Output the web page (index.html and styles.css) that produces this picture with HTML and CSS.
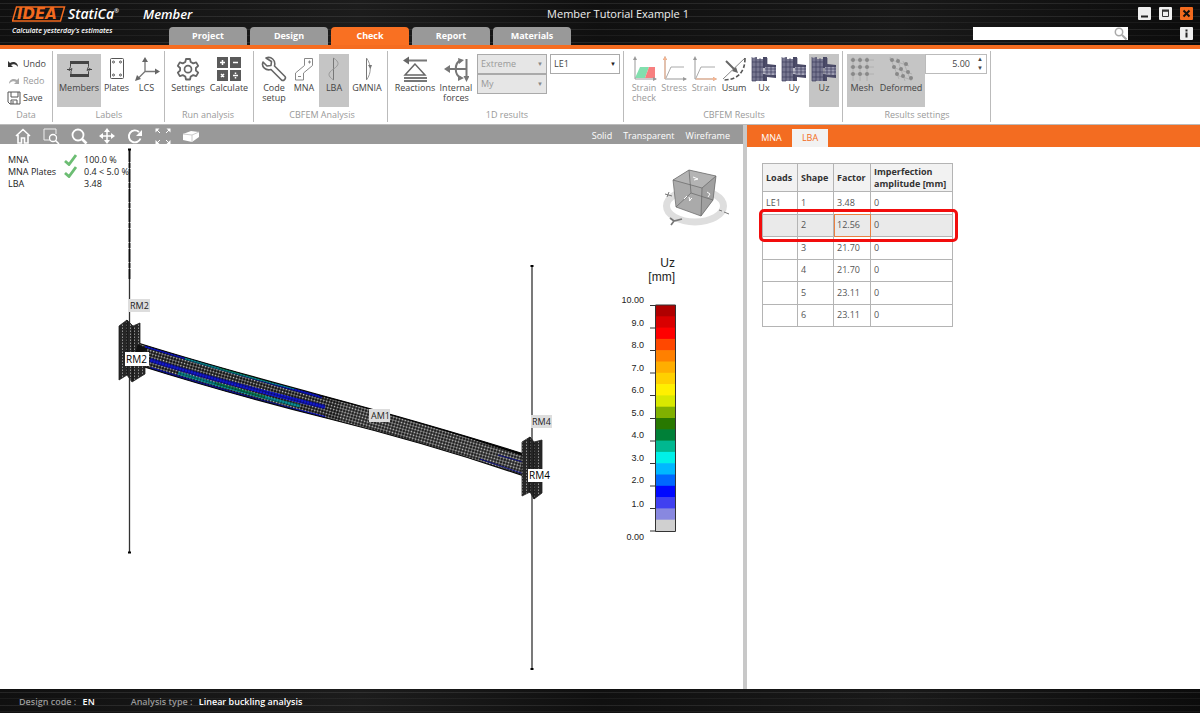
FILE: index.html
```html
<!DOCTYPE html>
<html lang="en">
<head>
<meta charset="utf-8">
<title>IDEA StatiCa Member</title>
<link rel="stylesheet" href="styles.css">
</head>
<body>
<svg class="defs" aria-hidden="true">
  <symbol id="joint" viewBox="0 0 26 26">
    <path d="M1 2l5-1v24H1zM6 3h6v22H6z" fill="#777790"/>
    <path d="M12 1h4v7l9 1v3H12zM12 18l13 1v3l-9-1v4h-4z" fill="#4c4c68"/>
    <path d="M14 11h11v8l-11-1z" fill="#9c9cb2"/>
    <path d="M1 1v24h4V1M9 2v23M13 1v24M16 2v6M16 11v7M20 10v9M24 9v12M1 6h11M1 11h11M1 16h24M1 21h11M14 13h11" fill="none" stroke="#3e3e5b" stroke-width=".7"/>
  </symbol>
  <symbol id="axes" viewBox="0 0 26 26">
    <path d="M4 2v21h21" fill="none" stroke="#999"/>
    <path d="M4 0L2 4h4zM26 23l-4-2v4z" fill="#999"/>
  </symbol>
</svg>

<header class="titlebar">
  <div class="brand">
    <div class="brand-row">
      <svg class="logo" width="54" height="16" viewBox="0 0 54 16" role="img" aria-label="IDEA">
        <path d="M4.500 1h48l-4 14h-48z" fill="none" stroke="#f26a1e" stroke-width="1.500"/>
        <text x="5" y="13" class="logo-text">IDEA</text>
      </svg>
      <span class="brand-name">StatiCa<sup>®</sup></span>
      <span class="brand-app">Member</span>
    </div>
    <div class="tagline">Calculate yesterday's estimates</div>
  </div>
  <div class="doc-title">Member Tutorial Example 1</div>
  <div class="window-controls">
    <button aria-label="Minimize"><svg viewBox="0 0 13 13"><path d="M3 9.500h7" stroke="#222" stroke-width="2"/></svg></button>
    <button aria-label="Maximize"><svg viewBox="0 0 13 13"><path d="M3.500 4h6v5.500h-6z" fill="none" stroke="#333"/><path d="M3 3.500h7" stroke="#333" stroke-width="2"/></svg></button>
    <button class="close" aria-label="Close"><svg viewBox="0 0 13 13"><path d="M3.500 3.500l6 6m0-6l-6 6" stroke="#111" stroke-width="2"/></svg></button>
  </div>
  <nav class="tabs">
    <button>Project</button><button>Design</button><button class="active">Check</button><button>Report</button><button>Materials</button>
  </nav>
  <div class="search-row">
    <div class="search">
      <input type="text" aria-label="Search">
      <svg viewBox="0 0 13 13"><circle cx="5" cy="5" r="3.700" fill="none" stroke="#aaa" stroke-width="1.500"/><path d="M8 8l4.500 4.500" stroke="#aaa" stroke-width="2"/></svg>
    </div>
    <button class="info" aria-label="Info"><svg viewBox="0 0 13 13"><path d="M6.500 2.500v2M6.500 5.500v5" stroke="#222" stroke-width="2"/></svg></button>
  </div>
</header>

<section class="ribbon">
  <div class="group data">
    <div class="stack">
      <button><svg viewBox="0 0 14 14"><path d="M1 4v6h5L4 8c3-2 6 0 7 2 0-5-5-6-8-4z" fill="#333"/></svg>Undo</button>
      <button class="off"><svg viewBox="0 0 14 14"><path d="M12 4v6H7l2-2C6 6 3 8 2 10c0-5 5-6 8-4z" fill="#aaa"/></svg>Redo</button>
      <button><svg viewBox="0 0 14 14"><path d="M1 1h12v12H3l-2-2zM4 1v5h7V1M4 13V9h6v4M6 10v3" fill="none" stroke="#555"/></svg>Save</button>
    </div>
    <h2>Data</h2>
  </div>

  <div class="group labels">
    <div class="tools">
      <button class="tool w44 on"><svg viewBox="0 0 26 26"><path d="M4 6.500h19M4 19.500h19" stroke="#444" stroke-width="3"/><path d="M4.500 5v5.500l-1.500 4 3-2-1 3v5.500M22.500 5v5.500l-1.500 4 3-2-1.500 3v5.500M1 13.500h4M22 13.500h4" fill="none" stroke="#444"/></svg>Members</button>
      <button class="tool w31"><svg viewBox="0 0 26 26"><rect x="6.500" y="2.500" width="13" height="20" rx="1" fill="none" stroke="#555"/><g fill="none" stroke="#555"><circle cx="9.500" cy="6" r="1"/><circle cx="16.500" cy="6" r="1"/><circle cx="9.500" cy="19" r="1"/><circle cx="16.500" cy="19" r="1"/></g></svg>Plates</button>
      <button class="tool w29"><svg viewBox="0 0 26 26"><path d="M11 3v12.500h13M11 15.500l-8 8" fill="none" stroke="#777" stroke-width="1.300"/><path d="M11 1L8 6h6zM26 15.500l-5-3v6zM1 25l2-6 4 4z" fill="#666"/></svg>LCS</button>
    </div>
    <h2>Labels</h2>
  </div>

  <div class="group run">
    <div class="tools">
      <button class="tool w42"><svg viewBox="0 0 26 26"><path d="M11 3h4l.700 3 2.500 1.400 3-1 2 3.500-2.300 2.100v2.500l2.300 2.100-2 3.500-3-1-2.500 1.400-.700 3h-4l-.700-3-2.500-1.400-3 1-2-3.500 2.300-2.100V12L2.800 9.900l2-3.500 3 1L10.300 6z" fill="none" stroke="#666" stroke-width="1.800" stroke-linejoin="round"/><circle cx="13" cy="13.200" r="3.500" fill="none" stroke="#666" stroke-width="1.700"/></svg>Settings</button>
      <button class="tool w40"><svg viewBox="0 0 26 26"><path d="M1 1h11v11H1zM14 1h11v11H14zM1 14h11v11H1zM14 14h11v11H14z" fill="#5a5a5a"/><path d="M6.500 4v5M4 6.500h5M17 6.500h5M5 18l3 3m0-3l-3 3M17 19.500h5M19.500 16.500v1.500M19.500 21v1.500" stroke="#fff" stroke-width="1.500"/></svg>Calculate</button>
    </div>
    <h2>Run analysis</h2>
  </div>

  <div class="group cbfem">
    <div class="tools">
      <button class="tool w30"><svg viewBox="0 0 26 26"><path d="M5 2c5-2 10 2 8.500 8L24 20.500c1.500 2-1.500 5-3.500 3.500L10 13.500C5 15 0 11 2 6l4 4 4-.500.500-4z" fill="none" stroke="#666" stroke-width="1.600" stroke-linejoin="round"/></svg>Code setup</button>
      <button class="tool w30"><svg viewBox="0 0 26 26"><path d="M13.500 2.500h8v7l-9 7.500v7h-8v-7l9-7.500zM17 6h3M18.500 4.500v3M7 20.500h3" fill="none" stroke="#888"/></svg>MNA</button>
      <button class="tool w30 on"><svg viewBox="0 0 26 26"><path d="M12.500 2v22" stroke="#777"/><path d="M12.500 2c6 4 6 7 0 11s-6 7 0 11" fill="none" stroke="#999"/></svg>LBA</button>
      <button class="tool w36"><svg viewBox="0 0 26 26"><path d="M12.500 2v22" stroke="#777"/><path d="M12.500 2c5 7 5 15 0 22" fill="none" stroke="#999"/><path d="M14 9h4l-1.500 4z" fill="#777"/></svg>GMNIA</button>
    </div>
    <h2>CBFEM Analysis</h2>
  </div>

  <div class="group oned">
    <div class="tools">
      <button class="tool w42"><svg viewBox="0 0 26 26"><path d="M6 4.500h19M2 22h23M2 25h23" stroke="#777" stroke-width="2"/><path d="M1 4.500l6-4v8z" fill="#666"/><path d="M13 8L3 19h20z" fill="none" stroke="#666" stroke-width="1.500"/></svg>Reactions</button>
      <button class="tool w40"><svg viewBox="0 0 26 26"><path d="M5 13h14M18 4c-7 3-7 15 0 18M23.500 3v18M19 13h5" fill="none" stroke="#777" stroke-width="2"/><path d="M1 13l6-4v8zM21 4l-6-2 1 6zM23.500 26l-3-6h6zM21 22l-6-3v6z" fill="#777"/></svg>Internal forces</button>
      <div class="selects">
        <span class="select off"><select disabled aria-label="Extreme"><option>Extreme</option></select></span>
        <span class="select off"><select disabled aria-label="Component"><option>My</option></select></span>
      </div>
      <span class="select"><select aria-label="Load"><option>LE1</option></select></span>
    </div>
    <h2>1D results</h2>
  </div>

  <div class="group results">
    <div class="tools">
      <button class="tool w30 off"><svg viewBox="0 0 26 26"><path d="M4 22l5-11h9l-4 11z" fill="#82dfae"/><path d="M14 22l4-11h6v11z" fill="#f77f7f"/><use href="#axes"/></svg>Strain check</button>
      <button class="tool w30 off"><svg viewBox="0 0 26 26"><use href="#axes"/><path d="M4 2v21" stroke="#f8b58f"/><path d="M4 0L2 4h4z" fill="#f8b58f"/><path d="M5 22l5-11h13" fill="none" stroke="#aaa"/></svg>Stress</button>
      <button class="tool w30 off"><svg viewBox="0 0 26 26"><use href="#axes"/><path d="M5 23h20" stroke="#f8b58f"/><path d="M26 23l-4-2v4z" fill="#f8b58f"/><path d="M5 22l5-11h14" fill="none" stroke="#aaa"/></svg>Strain</button>
      <button class="tool w30"><svg viewBox="0 0 26 26"><path d="M2 23L24 2" stroke="#888"/><path d="M5 5l9 9" stroke="#666" stroke-width="2"/><path d="M17 17l-6-2 4-4z" fill="#666"/><path d="M24 2c0 15-8 22-22 22" fill="none" stroke="#555" stroke-width="1.600" stroke-dasharray="4 2"/></svg>Usum</button>
      <button class="tool w30"><svg viewBox="0 0 26 26"><use href="#joint"/></svg>Ux</button>
      <button class="tool w30"><svg viewBox="0 0 26 26"><use href="#joint"/></svg>Uy</button>
      <button class="tool w30 on"><svg viewBox="0 0 26 26"><use href="#joint"/></svg>Uz</button>
    </div>
    <h2>CBFEM Results</h2>
  </div>

  <div class="group settings">
    <div class="tools">
      <button class="tool w30 on"><svg viewBox="0 0 26 26"><path d="M1 4h24M1 11h24M1 18h24M4 1v24M11 1v24M18 1v24" stroke="#b0b0b0"/><g fill="#888"><circle cx="4" cy="4" r="2"/><circle cx="11" cy="4" r="2"/><circle cx="18" cy="4" r="2"/><circle cx="4" cy="11" r="2"/><circle cx="11" cy="11" r="2"/><circle cx="18" cy="11" r="2"/><circle cx="4" cy="18" r="2"/><circle cx="11" cy="18" r="2"/><circle cx="18" cy="18" r="2"/></g></svg>Mesh</button>
      <button class="tool w48 on"><svg viewBox="0 0 26 26"><path d="M1 3l20 7M4 11l20 7M8 19l16 5M2 1l9 22M9 2l8 23M15 5l8 20" stroke="#b0b0b0" fill="none"/><g fill="#888"><circle cx="4" cy="4" r="2"/><circle cx="10" cy="5" r="2"/><circle cx="18" cy="8" r="2"/><circle cx="6" cy="11" r="2"/><circle cx="13" cy="13" r="2"/><circle cx="20" cy="16" r="2"/><circle cx="9" cy="18" r="2"/><circle cx="15" cy="20" r="2"/><circle cx="23" cy="22" r="2"/></g></svg>Deformed</button>
      <div class="spin">
        <input type="text" value="5.00" aria-label="Deformation scale">
        <span class="arrows"><button aria-label="Increase">▲</button><button aria-label="Decrease">▼</button></span>
      </div>
    </div>
    <h2>Results settings</h2>
  </div>
</section>

<main class="workspace">
  <section class="model">
    <div class="viewbar">
      <div class="viewtools">
        <button aria-label="Home"><svg viewBox="0 0 18 18"><path d="M2 9l7-6.500L16 9M4 8v8h3.500v-5h3v5H14V8" fill="none" stroke="#fff" stroke-width="1.600"/></svg></button>
        <button aria-label="Zoom window"><svg viewBox="0 0 18 18"><path d="M8 13H2V2h12v5" fill="none" stroke="#eee"/><circle cx="11" cy="11" r="3.500" fill="none" stroke="#fff" stroke-width="1.300"/><path d="M13.500 13.500L17 17" stroke="#fff" stroke-width="1.600"/></svg></button>
        <button aria-label="Zoom"><svg viewBox="0 0 18 18"><circle cx="8" cy="8" r="5.500" fill="none" stroke="#fff" stroke-width="1.800"/><path d="M12 12l4.500 4.500" stroke="#fff" stroke-width="2.600"/></svg></button>
        <button aria-label="Pan"><svg viewBox="0 0 18 18"><path d="M9 3v12M3 9h12" stroke="#fff" stroke-width="1.500"/><path d="M9 1l3 4H6zM9 17l3-4H6zM1 9l4-3v6zM17 9l-4-3v6z" fill="#fff"/></svg></button>
        <button aria-label="Rotate"><svg viewBox="0 0 18 18"><path d="M14.500 11.500A6 6 0 1 1 13 5" fill="none" stroke="#fff" stroke-width="1.900"/><path d="M16 3v6h-6z" fill="#fff"/></svg></button>
        <button aria-label="Fit"><svg viewBox="0 0 18 18"><path d="M6 6L2.500 2.500M12 6l3.500-3.500M6 13l-3.500 3.500M12 13l3.500 3.500" stroke="#fff"/><path d="M1.500 1.500h4l-4 4zM16.500 1.500h-4l4 4zM1.500 17v-4l4 4zM16.500 17v-4l-4 4z" fill="#fff"/></svg></button>
        <button aria-label="Perspective"><svg viewBox="0 0 18 18"><path d="M1 7l8-3 8 1v5l-7 5-9-2z" fill="#fff"/><path d="M1 7l9 1 7-3M10 8v7" fill="none" stroke="#ccc"/></svg></button>
      </div>
      <div class="modes"><button>Solid</button><button>Transparent</button><button>Wireframe</button></div>
    </div>
    <div class="canvas">
      <svg class="scene" viewBox="0 144 743 545" preserveAspectRatio="xMinYMin meet" role="img" aria-label="Deformed member model">
        <defs>
          <pattern id="mesh" width="3" height="3" patternUnits="userSpaceOnUse" patternTransform="rotate(16)">
            <path d="M0 0h3v3H0z" fill="#141414"/><circle cx="1.500" cy="1.500" r="1" fill="#c4c4c4"/>
          </pattern>
          <pattern id="grid" width="3" height="3" patternUnits="userSpaceOnUse" patternTransform="rotate(16)">
            <path d="M0 0h3M0 0v3" stroke="#000" stroke-width=".9"/>
          </pattern>
          <pattern id="plate" width="4" height="3" patternUnits="userSpaceOnUse">
            <path d="M0 0h4v3H0z" fill="#262626"/><path d="M2.500 .5v1.500" stroke="#909090" stroke-width="1"/>
          </pattern>
          <clipPath id="beam"><path d="M138 343Q205 364 320 395T524 454v22Q430 444 330 419T138 365z"/></clipPath>
        </defs>
        <g stroke="#333" fill="none">
          <path d="M129.500 149v404M532 266v403" stroke-width="1.300"/>
          <path d="M129.500 149v130" stroke="#111" stroke-width="1.800" stroke-dasharray="13 1 5 1"/>
          <path d="M128 149.500h3M128 552.500h3M530.500 266h3M530.500 669h3" stroke="#000" stroke-width="2"/>
        </g>
        <g clip-path="url(#beam)">
          <path d="M130 335h400v150H130z" fill="url(#mesh)"/>
          <g fill="none">
            <path d="M145 346Q230 372 322 397" stroke="#0b14c4" stroke-width="3"/>
            <path d="M185 358Q240 375 295 388" stroke="#089098" stroke-width="3"/>
            <path d="M220 367L275 382" stroke="#0a8040" stroke-width="3"/>
            <path d="M150 360Q220 382 325 407" stroke="#1218d0" stroke-width="4"/>
            <path d="M178 373Q240 392 300 406" stroke="#089098" stroke-width="3"/>
            <path d="M215 383L265 397" stroke="#088050" stroke-width="2"/>
            <path d="M150 369Q240 397 325 418" stroke="#1118c8" stroke-width="4"/>
            <path d="M185 383L262 406" stroke="#0b9aa1" stroke-width="3"/>
            <path d="M498 455l25 7M480 459l44 15" stroke="#101482" stroke-width="1"/>
          </g>
          <path d="M145 340l195 50v35l-195-54z" fill="url(#grid)" opacity=".75"/>
          <path d="M320 393Q420 418 524 453" fill="none" stroke="#000" stroke-width="6"/>
        </g>
        <path d="M138 343Q205 364 320 395T524 454M524 476Q430 444 330 419T138 365" fill="none" stroke="#080808" stroke-width="1.200"/>
        <path d="M119 326l8-6 6 6 7-3v22l5 4v25l-5 3-8 5-5-7-8 5zM522 442l8-5 4 5 8-2v53l-8 6-4-7-8 4z" fill="url(#plate)" stroke="#222" stroke-width=".8"/>
        <path d="M127 320v55M133 327v54M138 345l9 4-12 7zM530 437v56M534 442v57" fill="#111" stroke="#111"/>
        <g class="tag">
          <path d="M128 299h22v13h-22zM369 409h21v13h-21zM531 415h21v13h-21z" fill="#ddd"/>
          <text x="130" y="309">RM2</text><text x="371" y="419">AM1</text><text x="532" y="425">RM4</text>
        </g>
        <g class="tag front">
          <path d="M125 352h24v14h-24zM528 469h23v13h-23z" fill="#fff"/>
          <text x="126" y="363">RM2</text><text x="529" y="479">RM4</text>
        </g>
      </svg>

      <dl class="summary">
        <dt>MNA</dt><dd class="mark"><svg viewBox="0 0 13 12"><path d="M1 7l4 3.500L12 1" fill="none" stroke="#6cbd73" stroke-width="2.800"/></svg></dd><dd>100.0 %</dd>
        <dt>MNA Plates</dt><dd class="mark"><svg viewBox="0 0 13 12"><path d="M1 7l4 3.500L12 1" fill="none" stroke="#6cbd73" stroke-width="2.800"/></svg></dd><dd>0.4 &lt; 5.0 %</dd>
        <dt>LBA</dt><dd class="mark"></dd><dd>3.48</dd>
      </dl>

      <svg class="cube" width="75" height="65" viewBox="660 165 75 65" role="img" aria-label="View orientation">
        <ellipse cx="695" cy="206" rx="28.500" ry="16" fill="none" stroke="#dedede" stroke-width="7"/>
        <path d="M673 180l16-10 27 6-3 24-12 16-25-9z" fill="#aaa"/>
        <path d="M673 180l16-10 27 6-14 12z" fill="#b4b4b4"/>
        <path d="M702 188l14-12-3 24-12 16z" fill="#a0a0a0"/>
        <path d="M673 180l16-10 27 6-14 12zM673 180l3 27 25 9 12-16 3-24M702 188l-1 28M689 170l2 23 22 7M691 193l-15 14" fill="none" stroke="#666" stroke-width=".7"/>
        <path d="M693 177l5 2-4 1M707 192l3 2-2 3M687 196l-3 3M689 197l1 4M692 198l-3 3" fill="none" stroke="#fff"/>
        <path d="M665 194l7 2M669 192l-2 5M719 210l3 1M724 212l5 2" stroke="#777"/>
        <path d="M670 218l4 3 8-2M674 221l-3 4" fill="none" stroke="#777" stroke-width="1.700"/>
      </svg>

      <svg class="legend" width="60" height="290" viewBox="620 255 60 290" role="img" aria-label="Uz in millimetres">
        <g class="legend-title"><text x="675" y="267">Uz</text><text x="675" y="281">[mm]</text></g>
        <g class="bands" transform="translate(656 305)">
          <rect height="12" fill="#b00000"/><rect y="11.300" fill="#d90000"/><rect y="22.600" fill="#ff0000"/><rect y="33.900" fill="#ff4800"/><rect y="45.200" fill="#ff8000"/><rect y="56.500" fill="#ffae00"/><rect y="67.800" fill="#ffd000"/><rect y="79.100" fill="#fff000"/><rect y="90.400" fill="#d8e800"/><rect y="101.700" fill="#80b000"/><rect y="113" fill="#287800"/><rect y="124.300" fill="#008038"/><rect y="135.600" fill="#00b890"/><rect y="146.900" fill="#00f0e8"/><rect y="158.200" fill="#00b8ff"/><rect y="169.500" fill="#0068ff"/><rect y="180.800" fill="#0008ff"/><rect y="192.100" fill="#4040f0"/><rect y="203.400" fill="#8888e0"/><rect y="214.700" fill="#d0d0d0"/>
        </g>
        <path d="M655.500 305v226.500h20V305zM650 305.500h6M650 328h6M650 350.500h6M650 373h6M650 395.500h6M650 418.500h6M650 441h6M650 463.500h6M650 486h6M650 508.500h6M650 531h6" fill="none" stroke="#333"/>
        <g class="legend-scale">
          <text x="644" y="303">10.00</text><text x="644" y="326">9.0</text><text x="644" y="348">8.0</text><text x="644" y="371">7.0</text><text x="644" y="393">6.0</text><text x="644" y="416">5.0</text><text x="644" y="438">4.0</text><text x="644" y="461">3.0</text><text x="644" y="483">2.0</text><text x="644" y="507">1.0</text><text x="644" y="540">0.00</text>
        </g>
      </svg>
    </div>
  </section>
  <div class="splitter"></div>
  <aside class="results-pane">
    <div class="result-tabs"><button>MNA</button><button class="active">LBA</button></div>
    <div class="table-wrap">
      <table>
        <thead><tr><th class="c-loads">Loads</th><th class="c-shape">Shape</th><th class="c-factor">Factor</th><th class="c-amp">Imperfection<br>amplitude [mm]</th></tr></thead>
        <tbody>
          <tr><td>LE1</td><td>1</td><td>3.48</td><td>0</td></tr>
          <tr class="selected"><td></td><td>2</td><td class="focus">12.56</td><td>0</td></tr>
          <tr><td></td><td>3</td><td>21.70</td><td>0</td></tr>
          <tr><td></td><td>4</td><td>21.70</td><td>0</td></tr>
          <tr><td></td><td>5</td><td>23.11</td><td>0</td></tr>
          <tr><td></td><td>6</td><td>23.11</td><td>0</td></tr>
        </tbody>
      </table>
      <div class="callout"></div>
    </div>
  </aside>
</main>

<footer class="status">
  <span>Design code : <b>EN</b></span>
  <span>Analysis type : <b>Linear buckling analysis</b></span>
</footer>
</body>
</html>
```

FILE: styles.css
```css
* { box-sizing: border-box; }
body {
  margin: 0;
  min-height: 100vh;
  display: flex;
  flex-direction: column;
  font: 9px/12px "Open Sans", "Noto Sans", sans-serif;
  color: #444;
  background: #fff;
}
button, input, select { font: inherit; color: inherit; margin: 0; padding: 0; border: 0; background: none; border-radius: 0; }
svg { display: block; }
.defs { position: absolute; width: 0; height: 0; }

.titlebar, .status {
  background:
    repeating-linear-gradient(180deg, transparent 0 3px, rgba(255,255,255,.09) 3px 4px, transparent 4px 9px, rgba(255,255,255,.05) 9px 10px, transparent 10px 13px),
    linear-gradient(90deg, #101010, #1c1c1c 30%, #101010 50%, #191919 75%, #0c0c0c);
}
.titlebar {
  display: grid;
  grid-template-columns: 169px 1fr auto;
  grid-template-rows: 27px 18px;
  border-bottom: 4px solid #f56c20;
  color: #fff;
}
.brand { grid-area: 1 / 1 / 3 / 3; padding: 5px 0 0 12px; }
.brand-row { display: flex; align-items: center; height: 18px; }
.logo-text { font: italic bold 15px "DejaVu Sans", sans-serif; fill: #f26a1e; }
.brand-name { font: italic 600 14px/18px "Open Sans", sans-serif; margin-left: 2px; width: 75px; }
.brand-name sup { font-size: 6px; line-height: 1px; vertical-align: 6px; }
.brand-app { font: italic 600 13px/18px "Open Sans", sans-serif; }
.tagline { font: italic 600 7px/10px "Open Sans", sans-serif; margin-top: 3px; }
.doc-title { grid-area: 1 / 1 / 2 / 4; text-align: center; padding-left: 36px; font-size: 11px; line-height: 28px; color: #eee; }
.window-controls { grid-area: 1 / 3; display: flex; justify-content: flex-end; gap: 8px; padding: 7px 7px 0 0; }
.window-controls button, .info { width: 13px; height: 13px; background: #eee; border-radius: 1px; }
.window-controls .close { background: #f26a1e; }
.tabs { grid-area: 2 / 2; display: flex; gap: 3px; }
.tabs button { width: 78px; background: #999; color: #fff; font-weight: 700; border-radius: 4px 4px 0 0; }
.tabs .active { background: #f97022; }
.search-row { grid-area: 2 / 3; display: flex; gap: 52px; padding-right: 7px; }
.search { display: flex; align-items: center; width: 155px; height: 13px; background: #fff; padding-right: 1px; }
.search input { flex: 1; min-width: 0; height: 13px; color: #333; padding-left: 3px; }
.search svg { width: 13px; height: 13px; }

.ribbon { display: flex; height: 76px; padding-top: 2px; border-bottom: 1px solid #bbb; }
.group { display: flex; flex-direction: column; justify-content: space-between; border-right: 1px solid #bbb; padding-top: 3px; margin-bottom: 2px; }
.group h2 { margin: 0 0 1px; font: inherit; color: #999; text-align: center; }
.tools { display: flex; align-items: flex-start; }
.data { width: 53px; padding-left: 7px; }
.data h2 { margin-left: -7px; }
.labels { padding-left: 4px; padding-right: 3px; }
.run { padding-left: 2px; padding-right: 4px; }
.cbfem { padding-left: 5px; padding-right: 2px; }
.oned { padding-left: 6px; padding-right: 3px; }
.results { padding-left: 5px; padding-right: 3px; }
.settings { padding-left: 4px; padding-right: 3px; }
.stack { padding-top: 1px; }
.stack button { display: flex; align-items: center; gap: 2px; height: 17px; white-space: nowrap; }
.stack svg { width: 14px; height: 14px; }
.off { color: #999; }
.tool { height: 53px; line-height: 10px; display: flex; flex-direction: column; align-items: center; padding-top: 2px; gap: 1px; }
.tool svg { width: 26px; height: 26px; flex: none; }
.tool.on { background: #c5c5c5; }
.w29 { width: 29px; }
.w30 { width: 30px; }
.w31 { width: 31px; }
.w36 { width: 36px; }
.w40 { width: 40px; }
.w42 { width: 42px; }
.w44 { width: 44px; }
.w48 { width: 48px; }
.selects { margin: 0 3px 0 1px; }
.select { display: block; position: relative; width: 70px; height: 20px; border: 1px solid #aaa; background: #fff; }
.select select { appearance: none; width: 100%; height: 18px; padding-left: 3px; opacity: 1; }
.select::after { content: "▼"; position: absolute; right: 3px; top: 3px; font-size: 6px; pointer-events: none; color: #222; }
.select.off { background: #e6e6e6; }
.select.off::after { color: #888; }
.spin { display: flex; width: 62px; height: 20px; border: 1px solid #bbb; }
.spin input { flex: 1; min-width: 0; text-align: right; }
.arrows { display: flex; flex-direction: column; width: 16px; }
.arrows button { height: 9px; font-size: 6px; line-height: 9px; padding-left: 4px; }

.workspace { flex: 1; display: grid; grid-template-columns: minmax(0, 743fr) 4px minmax(0, 453fr); }
.model { display: flex; flex-direction: column; }
.viewbar { display: flex; justify-content: space-between; align-items: center; height: 19px; padding: 0 13px 0 9px; background: #999; color: #fff; }
.viewtools { display: flex; }
.viewtools button { width: 28px; display: flex; justify-content: center; margin-top: 2px; }
.viewtools svg { width: 18px; height: 18px; }
.modes { display: flex; gap: 11px; padding-top: 2px; }
.canvas { position: relative; flex: 1; }
.scene { width: 100%; }
.tag text { font: 9px "Open Sans", sans-serif; fill: #222; }
.tag.front text { font-size: 10px; fill: #000; }
.summary { position: absolute; left: 8px; top: 10px; margin: 0; display: grid; grid-template-columns: 56px 20px auto; color: #222; line-height: 12px; }
.summary dd { margin: 0; }
.summary svg { width: 13px; height: 12px; }
.cube { position: absolute; right: 8px; top: 21px; }
.legend { position: absolute; right: 63px; top: 111px; }
.legend text { text-anchor: end; fill: #222; }
.legend-title { font: 12px "Liberation Sans", Arial, sans-serif; }
.legend-scale { font: 9px "Liberation Sans", Arial, sans-serif; }
.bands rect { width: 19px; height: 12px; }
.splitter { background: #c8c8c8; }

.result-tabs { display: flex; height: 22px; background: #f36c21; padding: 4px 0 0 4px; }
.result-tabs button { width: 41px; color: #fff; }
.result-tabs .active { width: 36px; background: #f2f2f2; color: #f36c21; }
.table-wrap { position: relative; width: fit-content; margin: 16px 0 0 15px; }
table { border-collapse: collapse; height: 164px; color: #555; }
th, td { border: 1px solid #b4b4b4; text-align: left; padding: 0 3px; }
th { height: 28px; background: #f2f2f2; color: #333; font-weight: 700; white-space: nowrap; }
.c-loads { width: 35px; }
.c-shape { width: 36px; }
.c-factor { width: 37px; }
.c-amp { width: 82px; }
.selected td { background: #eaeaea; }
.selected .focus { outline: 1px solid #ea8142; outline-offset: -1px; }
.callout { position: absolute; left: -3px; right: -5px; top: 46px; height: 33px; border: 3px solid #f20d0d; border-radius: 5px; pointer-events: none; }

.status { display: flex; align-items: center; gap: 36px; height: 24px; padding: 2px 0 0 19px; font-weight: 600; color: #999; }
.status b { color: #fff; margin-left: 4px; font-weight: 600; }
```
